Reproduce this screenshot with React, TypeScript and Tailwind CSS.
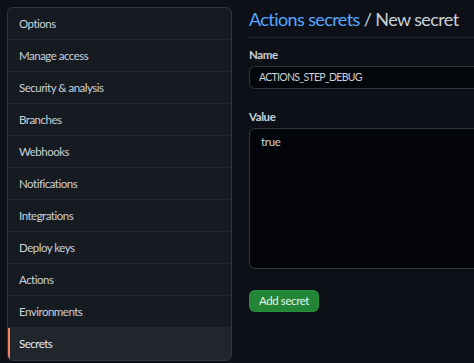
import React from "react";

const menu = [
  "Options",
  "Manage access",
  "Security & analysis",
  "Branches",
  "Webhooks",
  "Notifications",
  "Integrations",
  "Deploy keys",
  "Actions",
  "Environments",
  "Secrets",
];

export default function App() {
  return (
    <div
      className="w-[474px] h-[363px] overflow-hidden bg-[#0d1117] flex text-[#c9d1d9]"
      style={{ fontFamily: "Lato, 'Noto Sans', sans-serif" }}
    >
      {/* Sidebar */}
      <div className="w-[249px] shrink-0 pl-[7px] pt-[7px] pr-[17px]">
        <nav className="border border-[#30363d] rounded-md bg-[#161b22] overflow-hidden">
          {menu.map((item, i) => (
            <div
              key={item}
              className={`relative h-[32px] flex items-center pl-[11px] text-[11.5px] tracking-[-0.5px] ${
                i < menu.length - 1 ? "border-b border-[#21262d]" : ""
              } ${item === "Secrets" ? "bg-[#21262d] text-[#e6edf3]" : ""}`}
            >
              {item === "Secrets" && (
                <span className="absolute left-0 top-0 bottom-0 w-[2px] bg-[#f78166]" />
              )}
              {item}
            </div>
          ))}
        </nav>
      </div>

      {/* Content */}
      <div className="flex-1 min-w-0 pt-[7px]">
        <h2 className="text-[18px] leading-[24px] tracking-[-0.6px] pb-[6px] border-b border-[#21262d] whitespace-nowrap">
          <span className="text-[#58a6ff]">Actions secrets</span>
          <span className="text-[#c9d1d9]"> / New secret</span>
        </h2>

        <div className="mt-[10px] text-[11.5px] leading-[14px] font-bold tracking-[-0.4px]">Name</div>
        <div className="mt-[4px] h-[23px] -mr-[20px] flex items-center pl-[9px] text-[10.5px] tracking-[-0.7px] border border-[#30363d] rounded-md bg-[#03060b]">
          ACTIONS_STEP_DEBUG
        </div>

        <div className="mt-[21px] text-[11.5px] leading-[14px] font-bold tracking-[-0.4px]">Value</div>
        <div className="mt-[4px] h-[141px] -mr-[20px] pl-[11px] pt-[6px] text-[11.5px] leading-[14px] tracking-[-0.3px] border border-[#30363d] rounded-md bg-[#03050a]">
          true
        </div>

        <button className="mt-[21px] h-[22px] w-[70px] rounded-md bg-[#238636] border border-[#2ea043]/40 text-[11.5px] tracking-[-0.4px] text-[#e6f4ea]">
          Add secret
        </button>
      </div>
    </div>
  );
}
